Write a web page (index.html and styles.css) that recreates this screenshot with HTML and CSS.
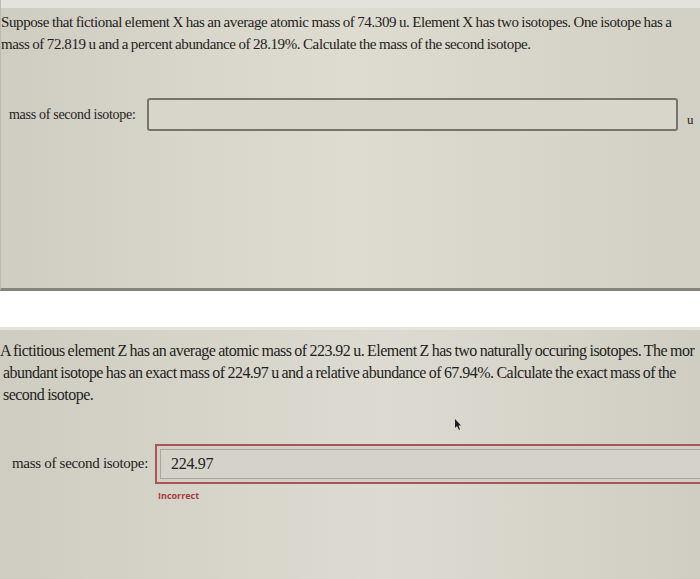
FILE: index.html
```html
<!DOCTYPE html>
<html>
<head>
<meta charset="utf-8">
<link rel="stylesheet" href="styles.css">
</head>
<body>
<section class="panel panel-top">
  <div class="strip"></div>
  <p class="question q1">
    <span class="line">Suppose that fictional element X has an average atomic mass of 74.309 u. Element X has two isotopes. One isotope has a</span>
    <span class="line">mass of 72.819 u and a percent abundance of 28.19%. Calculate the mass of the second isotope.</span>
  </p>
  <div class="answer a1">
    <span class="label">mass of second isotope:</span>
    <span class="input empty"></span>
    <span class="unit">u</span>
  </div>
</section>
<section class="panel panel-bottom">
  <p class="question q2">
    <span class="line">A fictitious element Z has an average atomic mass of 223.92 u. Element Z has two naturally occuring isotopes. The mor</span>
    <span class="line l2">abundant isotope has an exact mass of 224.97 u and a relative abundance of 67.94%. Calculate the exact mass of the</span>
    <span class="line l2">second isotope.</span>
  </p>
  <svg class="cursor" width="8" height="12" viewBox="0 0 8 12"><path d="M1 0 L1 9 L3 7 L5 11 L6 10.5 L4.5 6.5 L7 6.5 Z" fill="#1e1e1e"/></svg>
  <div class="answer a2">
    <span class="label">mass of second isotope:</span>
    <div class="field">
      <span class="input wrong"><span class="value">224.97</span></span>
      <span class="feedback">Incorrect</span>
    </div>
  </div>
</section>
</body>
</html>
```

FILE: styles.css
```css
html, body {
  margin: 0;
  padding: 0;
}
body {
  width: 700px;
  height: 579px;
  overflow: hidden;
  background: #ffffff;
  font-family: "Liberation Serif", "Times New Roman", serif;
  color: #1f1e1c;
}
.panel {
  position: relative;
  overflow: hidden;
  box-sizing: border-box;
}
.panel-top {
  height: 291px;
  background: linear-gradient(90deg, #cfccc1 0%, #d9d6cb 30%, #dedbd0 50%, #d9d6cb 70%, #d2cfc4 100%);
  border-bottom: 3px solid #86847c;
  border-left: 1px solid #bdbab0;
}
.strip {
  height: 8px;
  background: #e4e2dc;
}
.question {
  margin: 0;
  white-space: nowrap;
}
.line {
  display: block;
}
.q1 {
  margin-top: 3px;
  font-size: 15px;
  line-height: 22px;
  letter-spacing: -0.4px;
  word-spacing: -0.5px;
}
.answer {
  display: flex;
  align-items: flex-start;
}
.a1 {
  margin-top: 43px;
  align-items: center;
}
.label {
  font-size: 14px;
  letter-spacing: -0.3px;
  white-space: nowrap;
  flex-shrink: 0;
}
.a1 .label {
  padding-left: 8px;
  width: 129px;
}
.input {
  display: block;
  box-sizing: border-box;
}
.input.empty {
  width: 531px;
  height: 33px;
  border: 2px solid #75736c;
  border-radius: 3px;
  background: #d8d5ca;
  margin-left: 9px;
  flex-shrink: 0;
}
.unit {
  margin-left: 9px;
  margin-top: 10px;
  font-size: 13px;
}
.panel-bottom {
  margin-top: 36px;
  height: 252px;
  background: linear-gradient(90deg, #cfcdc2 0%, #d8d6cb 35%, #dddbd1 55%, #d6d4c9 80%, #d0cec3 100%);
  border-top: 3px solid #e6e4dd;
}
.q2 {
  margin-top: 10px;
  font-size: 16px;
  line-height: 22px;
  letter-spacing: -0.52px;
  word-spacing: -0.6px;
}
.l2 {
  padding-left: 3px;
}
.cursor {
  position: absolute;
  left: 454px;
  top: 89px;
}
.a2 {
  margin-top: 38px;
}
.a2 .label {
  padding-left: 12px;
  width: 143px;
  font-size: 15px;
  margin-top: 11px;
}
.field {
  display: flex;
  flex-direction: column;
  flex: 1;
}
.input.wrong {
  width: 560px;
  height: 40px;
  border: 2px solid #a9555a;
  border-right: none;
  background: #d2d0c5;
  padding: 3px 0 0 3px;
  position: relative;
}
.input.wrong::before {
  content: "";
  position: absolute;
  left: 3px;
  top: 3px;
  right: 0;
  bottom: 3px;
  border: 1px solid #a9a79e;
  border-right: none;
  background: #d5d3c9;
}
.value {
  position: relative;
  display: block;
  padding-left: 11px;
  font-size: 16px;
  line-height: 29px;
  letter-spacing: -0.3px;
}
.feedback {
  margin-top: 5px;
  margin-left: 3px;
  font-family: "Open Sans", "Liberation Sans", sans-serif;
  font-size: 9px;
  font-weight: 700;
  color: #a23d43;
}
```
